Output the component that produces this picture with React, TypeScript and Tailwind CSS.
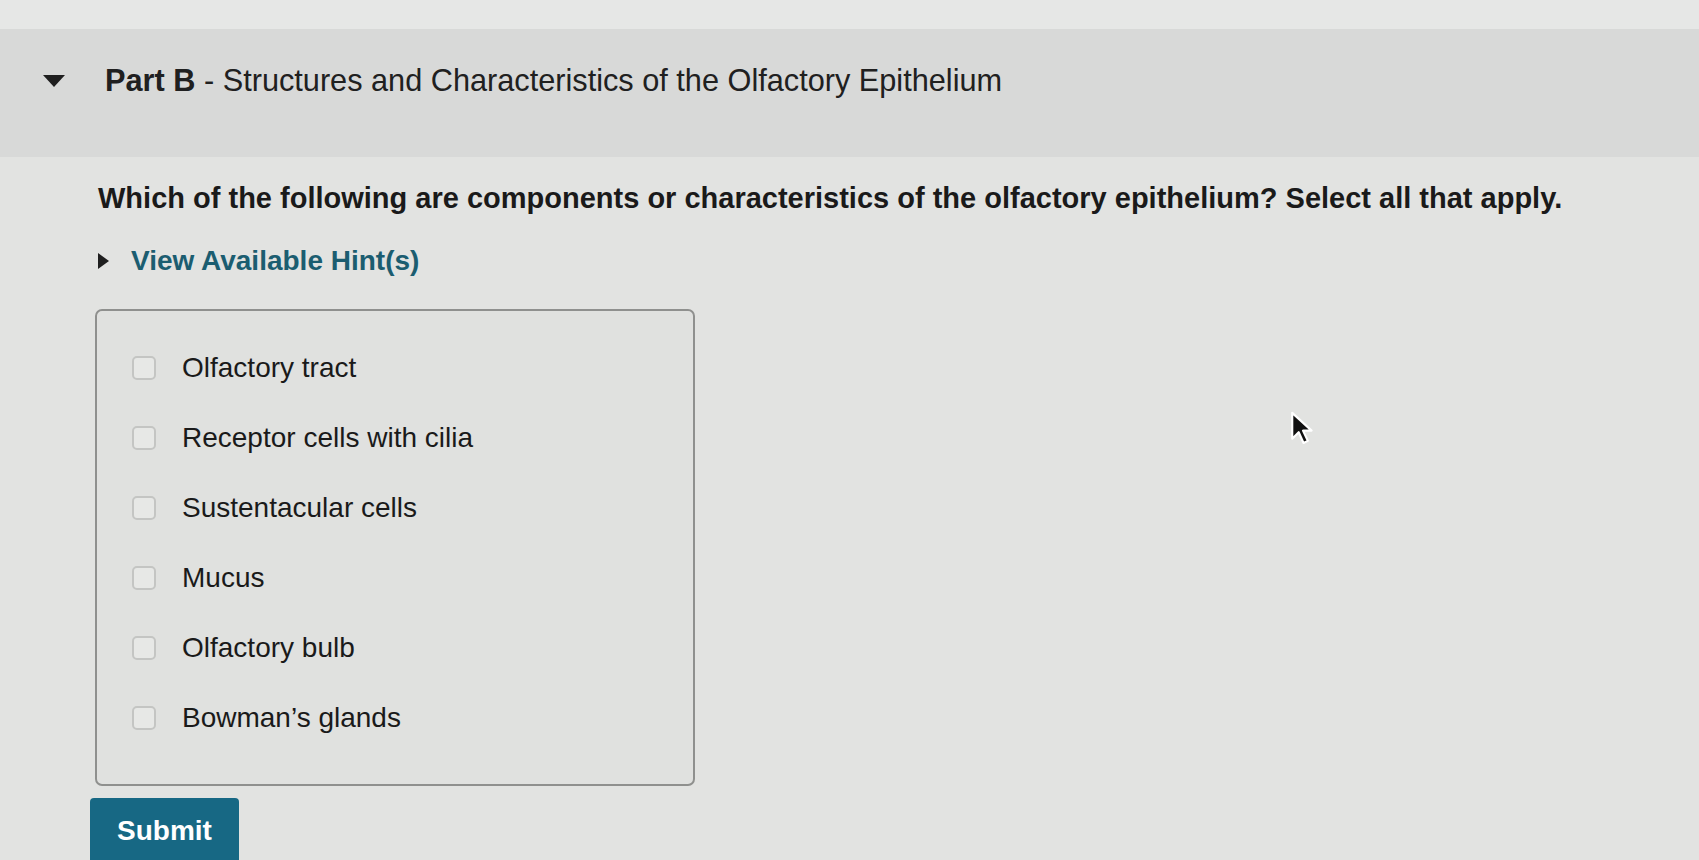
import React from 'react';

const options = [
  'Olfactory tract',
  'Receptor cells with cilia',
  'Sustentacular cells',
  'Mucus',
  'Olfactory bulb',
  'Bowman\u2019s glands',
];

const Checkbox = () => (
  <span className="block w-[24px] h-[24px] shrink-0 rounded-[5px] border-2 border-[#c4c5c3] bg-[#e7e8e6]" />
);

export default function App() {
  return (
    <div className="relative h-[860px] w-full overflow-hidden bg-[#e2e3e1] font-['Liberation_Sans',Arial,sans-serif] text-[#1c1c1c]">
      {/* top strip */}
      <div className="h-[29px] bg-[#e6e7e6]" />

      {/* part header */}
      <div className="h-[128px] bg-[#d8d9d8] flex items-start pt-[35px]">
        <div className="flex items-center h-[34px]">
          <svg className="ml-[43px] w-[22px] h-[12px]" viewBox="0 0 22 12">
            <polygon points="0,0 22,0 11,12" fill="#1f1f1f" />
          </svg>
          <h2 className="ml-[40px] text-[30.7px] leading-[34px] text-[#202020]">
            <span className="font-bold">Part B</span> - Structures and Characteristics of the Olfactory Epithelium
          </h2>
        </div>
      </div>

      <div className="pl-[98px]">
        <p className="mt-[25px] text-[29px] leading-[32px] font-bold text-[#1a1a1a]">
          Which of the following are components or characteristics of the olfactory epithelium? Select all that apply.
        </p>

        <div className="mt-[31px] flex items-center h-[32px]">
          <svg className="w-[11px] h-[16px]" viewBox="0 0 11 16">
            <polygon points="0,0 11,8 0,16" fill="#1f1f1f" />
          </svg>
          <span className="ml-[22px] text-[28px] leading-[32px] font-bold text-[#1b5d70]">View Available Hint(s)</span>
        </div>

        <div className="mt-[32px] -ml-[3px] w-[600px] h-[477px] rounded-[7px] border-2 border-[#8f908e] bg-[#e0e1df] pt-[22px] pl-[35px]">
          {options.map((o) => (
            <label key={o} className="flex items-center h-[70px] cursor-pointer">
              <Checkbox />
              <span className="ml-[26px] text-[28px] leading-[32px] text-[#1a1a1a]">{o}</span>
            </label>
          ))}
        </div>

        <button className="mt-[12px] -ml-[8px] w-[149px] h-[66px] rounded-t-[4px] bg-[#176884] text-white text-[28px] leading-[32px] font-semibold">
          Submit
        </button>
      </div>

      {/* mouse pointer */}
      <svg className="absolute left-[1289px] top-[409px] w-[28px] h-[40px]" viewBox="0 0 26 34">
        <path d="M3 2 L3 26 L9 20 L13.5 30 L17.5 28 L13 18.5 L21 18.5 Z" fill="#111" stroke="#fff" strokeWidth="2" strokeLinejoin="round" />
      </svg>
    </div>
  );
}
